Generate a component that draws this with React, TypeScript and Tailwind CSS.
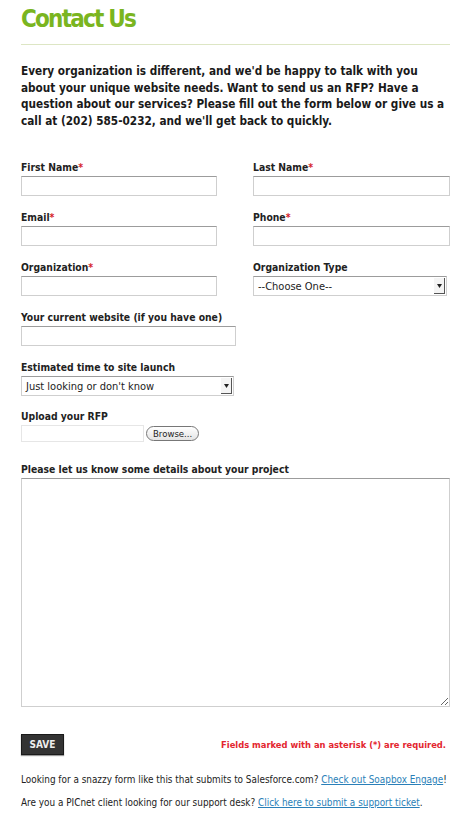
import React from "react"

const font = { fontFamily: '"DejaVu Sans Condensed", "DejaVu Sans", Verdana, sans-serif' }

function Label({ text, required }: { text: string; required?: boolean }) {
  return (
    <label className="block text-[10.3px] font-bold text-[#222] leading-[14px] mb-[2px]">
      {text}
      {required && <span className="text-[#d4202a]">*</span>}
    </label>
  )
}

function TextInput({ className = "" }: { className?: string }) {
  return (
    <input
      type="text"
      className={`block h-[20px] bg-white border border-[#cfcfcf] border-t-[#9c9c9c] outline-none ${className}`}
    />
  )
}

function SelectBox({ value, className = "" }: { value: string; className?: string }) {
  return (
    <div className={`flex items-center h-[20px] bg-white border border-[#cfcfcf] border-t-[#9c9c9c] ${className}`}>
      <span className="flex-1 pl-[4px] text-[11px] text-[#222] leading-none">{value}</span>
      <span className="flex items-center justify-center w-[11px] h-[16px] mr-[1px] border-r border-b border-[#555] bg-[#f4f4f4]">
        <svg width="5" height="4" viewBox="0 0 5 4">
          <path d="M0 0h5L2.5 4z" fill="#222" />
        </svg>
      </span>
    </div>
  )
}

export default function App() {
  return (
    <div className="min-h-screen bg-white text-[#1e1e1e] px-[21px]" style={font}>
      <h1 className="pt-[4px] text-[24px] font-bold text-[#7ab520] leading-[30px] tracking-[-1.8px]">
        Contact Us
      </h1>
      <div className="mt-[10px] h-px w-[429px] bg-[#dde6c4]" />

      <p className="mt-[18px] w-[430px] text-[11.7px] font-bold leading-[16.5px] text-[#1a1a1a]">
        Every organization is different, and we'd be happy to talk with you about your unique website needs. Want to send us an RFP? Have a question about our services? Please fill out the form below or give us a call at (202) 585-0232, and we'll get back to quickly.
      </p>

      <div className="mt-[31px] grid grid-cols-[196px_197px] gap-x-[36px] gap-y-[14px]">
        <div>
          <Label text="First Name" required />
          <TextInput className="w-[196px]" />
        </div>
        <div>
          <Label text="Last Name" required />
          <TextInput className="w-[197px]" />
        </div>
        <div>
          <Label text="Email" required />
          <TextInput className="w-[196px]" />
        </div>
        <div>
          <Label text="Phone" required />
          <TextInput className="w-[197px]" />
        </div>
        <div>
          <Label text="Organization" required />
          <TextInput className="w-[196px]" />
        </div>
        <div>
          <Label text="Organization Type" />
          <SelectBox value="--Choose One--" className="w-[194px]" />
        </div>
      </div>

      <div className="mt-[14px]">
        <Label text="Your current website (if you have one)" />
        <TextInput className="w-[215px]" />
      </div>

      <div className="mt-[14px]">
        <Label text="Estimated time to site launch" />
        <SelectBox value="Just looking or don't know" className="w-[213px]" />
      </div>

      <div className="mt-[13px]">
        <Label text="Upload your RFP" />
        <div className="flex items-center gap-[2px]">
          <div className="h-[17px] w-[123px] border border-[#e6e6e6] bg-white" />
          <button className="h-[15px] px-[6px] rounded-full border border-[#777] bg-gradient-to-b from-white to-[#e4e4e4] text-[9.5px] leading-none text-[#222]">
            Browse...
          </button>
        </div>
      </div>

      <div className="mt-[20px]">
        <Label text="Please let us know some details about your project" />
        <textarea className="block h-[229px] w-[429px] resize-y bg-white border border-[#cfcfcf] border-t-[#9c9c9c] outline-none" />
      </div>

      <div className="mt-[27px] flex items-center justify-between w-[425px]">
        <button className="h-[21px] w-[43px] bg-[#333] border border-[#1a1a1a] text-[10px] font-bold text-[#eee] leading-none shadow-[0_1px_1px_rgba(0,0,0,0.4)]">
          SAVE
        </button>
        <span className="text-[9.3px] font-bold text-[#e3262f]">
          Fields marked with an asterisk (*) are required.
        </span>
      </div>

      <div className="mt-[18px] text-[9.9px] text-[#222] leading-[14px] whitespace-nowrap">
        <p>
          Looking for a snazzy form like this that submits to Salesforce.com?{" "}
          <a href="#" className="text-[#2a7fb8] underline">Check out Soapbox Engage</a>!
        </p>
        <p className="mt-[9px]">
          Are you a PICnet client looking for our support desk?{" "}
          <a href="#" className="text-[#2a7fb8] underline">Click here to submit a support ticket</a>.
        </p>
      </div>
    </div>
  )
}
